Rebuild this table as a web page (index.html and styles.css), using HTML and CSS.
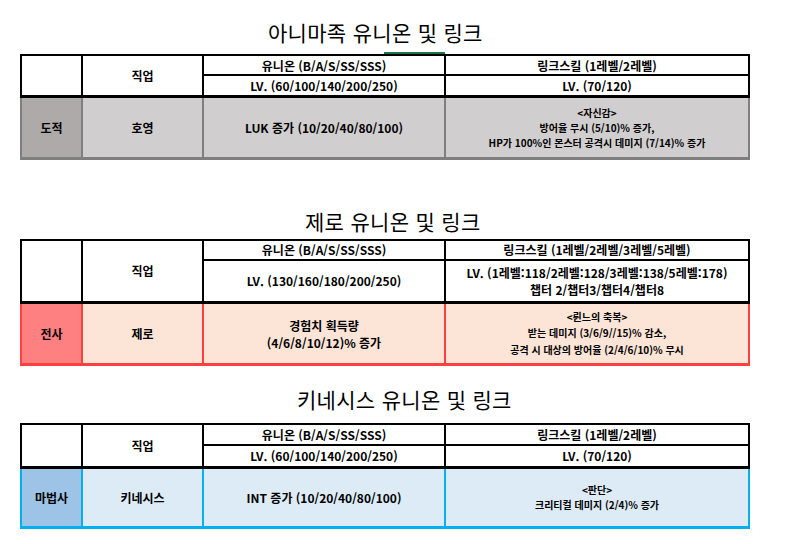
FILE: index.html
```html
<!DOCTYPE html>
<html lang="ko">
<head>
<meta charset="utf-8">
<title>유니온 및 링크</title>
<link rel="stylesheet" href="styles.css">
</head>
<body>
<section class="block block-anima">
  <h2 class="title">아니마족 유니온 및 링크</h2>
  <div class="sheet-wrap">
    <table class="sheet theme-gray">
      <colgroup><col class="c1"><col class="c2"><col class="c3"><col class="c4"></colgroup>
      <tr class="h1"><th rowspan="2" class="blank"></th><th rowspan="2">직업</th><th>유니온 (B/A/S/SS/SSS)</th><th>링크스킬 (1레벨/2레벨)</th></tr>
      <tr class="h2"><th>LV. (60/100/140/200/250)</th><th>LV. (70/120)</th></tr>
      <tr class="data"><td class="cls">도적</td><td>호영</td><td>LUK 증가 (10/20/40/80/100)</td><td class="link">&lt;자신감&gt;<br>방어율 무시 (5/10)% 증가,<br>HP가 100%인 몬스터 공격시 데미지 (7/14)% 증가</td></tr>
    </table>
  </div>
</section>

<section class="block block-zero">
  <h2 class="title">제로 유니온 및 링크</h2>
  <table class="sheet theme-red">
    <colgroup><col class="c1"><col class="c2"><col class="c3"><col class="c4"></colgroup>
    <tr class="h1"><th rowspan="2" class="blank"></th><th rowspan="2">직업</th><th>유니온 (B/A/S/SS/SSS)</th><th>링크스킬 (1레벨/2레벨/3레벨/5레벨)</th></tr>
    <tr class="h2 tall"><th>LV. (130/160/180/200/250)</th><th class="two">LV. (1레벨:118/2레벨:128/3레벨:138/5레벨:178)<br>챕터 2/챕터3/챕터4/챕터8</th></tr>
    <tr class="data"><td class="cls">전사</td><td>제로</td><td class="two">경험치 획득량<br>(4/6/8/10/12)% 증가</td><td class="link">&lt;륀느의 축복&gt;<br>받는 데미지 (3/6/9//15)% 감소,<br>공격 시 대상의 방어율 (2/4/6/10)% 무시</td></tr>
  </table>
</section>

<section class="block block-kine">
  <h2 class="title">키네시스 유니온 및 링크</h2>
  <table class="sheet theme-blue">
    <colgroup><col class="c1"><col class="c2"><col class="c3"><col class="c4"></colgroup>
    <tr class="h1"><th rowspan="2" class="blank"></th><th rowspan="2">직업</th><th>유니온 (B/A/S/SS/SSS)</th><th>링크스킬 (1레벨/2레벨)</th></tr>
    <tr class="h2"><th>LV. (60/100/140/200/250)</th><th>LV. (70/120)</th></tr>
    <tr class="data"><td class="cls">마법사</td><td>키네시스</td><td>INT 증가 (10/20/40/80/100)</td><td class="link">&lt;판단&gt;<br>크리티컬 데미지 (2/4)% 증가</td></tr>
  </table>
</section>
</body>
</html>
```

FILE: styles.css
```css
* { box-sizing: border-box; }

body {
  margin: 0;
  background: #ffffff;
  color: #000000;
  font-family: "Noto Sans CJK KR", "Noto Sans", sans-serif;
}

.block { display: flex; flex-direction: column; }

.title {
  margin: 0;
  height: 30px;
  font-size: 21px;
  line-height: 30px;
  font-weight: 400;
  letter-spacing: 0.3px;
}

.block-anima { padding-top: 17px; }
.block-anima .title { padding-left: 268px; margin-bottom: 7px; }

.block-zero { padding-top: 46px; }
.block-zero .title { padding-left: 305px; margin-bottom: 3px; }

.block-kine { padding-top: 18px; }
.block-kine .title { padding-left: 297px; margin-bottom: 9px; }

.sheet-wrap { position: relative; }
.sheet-wrap::before {
  content: "";
  position: absolute;
  left: 384px;
  top: -2px;
  width: 61px;
  height: 2px;
  background: #217346;
}

.sheet {
  border-collapse: collapse;
  table-layout: fixed;
  width: 728px;
  margin-left: 20px;
}

col.c1 { width: 61px; }
col.c2 { width: 121px; }
col.c3 { width: 242px; }
col.c4 { width: 304px; }

th, td {
  padding: 0;
  text-align: center;
  vertical-align: middle;
  font-size: 12px;
  font-weight: 700;
  line-height: 15px;
  white-space: nowrap;
}

th {
  border: 2px solid #000000;
  background: #ffffff;
}

.h1 th[rowspan] { border-bottom: 3px solid #000000; }
.h2 th { border-bottom: 3px solid #000000; }

.h1 { height: 20px; }
.h2 { height: 21px; }
.h2.tall { height: 43px; }
.theme-blue .h1 { height: 21px; }
.theme-blue .h2 { height: 22px; }

.two { line-height: 17px; }

.data { height: 62px; }
.theme-blue .data { height: 60px; }
.data td {
  border: 2px solid var(--bd);
  border-top: none;
  border-bottom: 3px solid var(--bd);
  background: var(--bg);
}
.data td.cls { background: var(--bg1); }
.data td.link { font-size: 10px; line-height: 15px; }
.theme-red .data td.link { line-height: 16.5px; }

.theme-gray { --bd: #7f7f7f; --bg: #d0cece; --bg1: #aeaaaa; }
.theme-red  { --bd: #ff4040; --bg: #fce4d6; --bg1: #ff8080; }
.theme-blue { --bd: #00b0f0; --bg: #ddebf7; --bg1: #9dc3e6; }
```
